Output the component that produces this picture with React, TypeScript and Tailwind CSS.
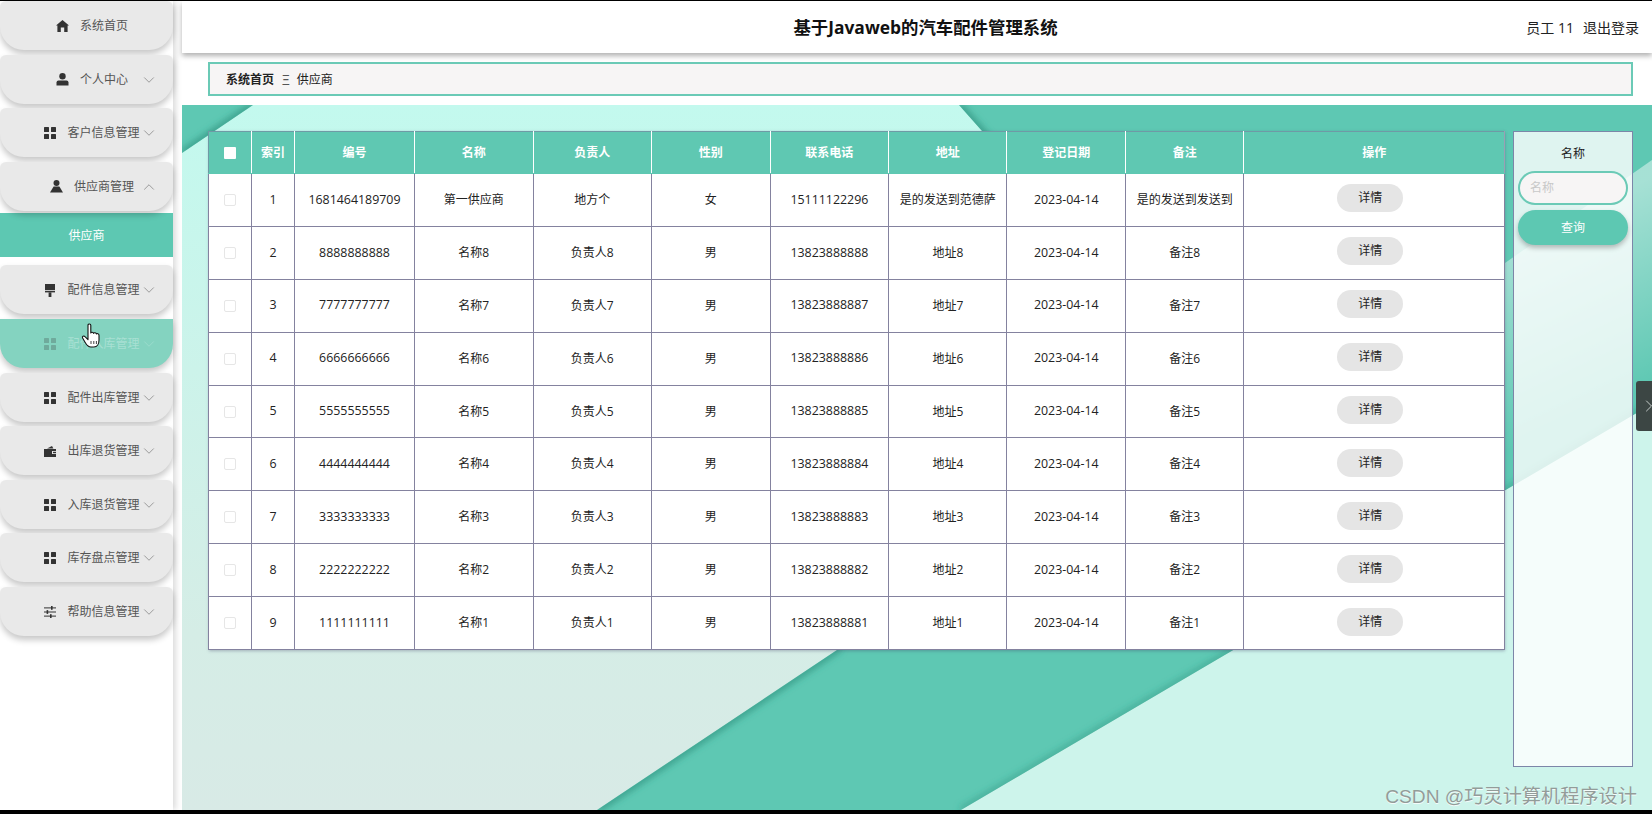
import React from "react";
import { ChevronDown, ChevronUp, ChevronRight } from "lucide-react";

const Home = () => (
  <svg width="13" height="12" viewBox="0 0 13 12" fill="#333"><path d="M6.5 0 L13 5.6 L11.6 5.6 V12 H8.2 V7.6 H4.8 V12 H1.4 V5.6 H0 Z" /></svg>
);
const User = () => (
  <svg width="13" height="13" viewBox="0 0 13 13" fill="#333"><circle cx="6.5" cy="3.2" r="3.2" /><path d="M0.5 9.5 Q0.5 7.6 2.5 7.6 H10.5 Q12.5 7.6 12.5 9.5 V12.5 H0.5 Z" /></svg>
);
const Custom = () => (
  <svg width="13" height="13" viewBox="0 0 13 13" fill="#333"><circle cx="6.5" cy="3" r="3" /><path d="M3.6 6.6 H9.4 L13 12.6 H0 Z" /></svg>
);
const Grid = () => (
  <svg width="12" height="12" viewBox="0 0 12 12" fill="#333"><rect width="5" height="5" rx="0.5" /><rect x="7" width="5" height="5" rx="0.5" /><rect y="7" width="5" height="5" rx="0.5" /><rect x="7" y="7" width="5" height="5" rx="0.5" /></svg>
);
const Brush = () => (
  <svg width="12" height="13" viewBox="0 0 12 13" fill="#333"><rect x="1" width="10" height="6" /><rect x="1" y="6.8" width="10" height="1.6" /><rect x="4.6" y="8.4" width="2.8" height="4.6" /></svg>
);
const Wallet = () => (
  <svg width="12" height="11" viewBox="0 0 12 11" fill="#333"><path d="M0 3 H12 V5 H8 V8 H12 V11 H0 Z" /><path d="M3 2.4 L8 0 L9.4 2.4 Z" /><rect x="9" y="5.8" width="3" height="1.4" /></svg>
);
const Sliders = () => (
  <svg width="12" height="12" viewBox="0 0 12 12" fill="#333"><rect y="1.4" width="12" height="1" /><rect x="7" y="0" width="1.6" height="3.8" /><rect y="5.5" width="12" height="1" /><rect x="2.6" y="4.1" width="1.6" height="3.8" /><rect y="9.6" width="12" height="1" /><rect x="6" y="8.2" width="1.6" height="3.8" /></svg>
);

type Item = { icon: React.ReactNode; label: string; arrow?: "down" | "up"; active?: boolean };
const items: Item[] = [
  { icon: <Home />, label: "系统首页" },
  { icon: <User />, label: "个人中心", arrow: "down" },
  { icon: <Grid />, label: "客户信息管理", arrow: "down" },
  { icon: <Custom />, label: "供应商管理", arrow: "up" },
  { icon: <Brush />, label: "配件信息管理", arrow: "down" },
  { icon: <Grid />, label: "配件入库管理", arrow: "down", active: true },
  { icon: <Grid />, label: "配件出库管理", arrow: "down" },
  { icon: <Wallet />, label: "出库退货管理", arrow: "down" },
  { icon: <Grid />, label: "入库退货管理", arrow: "down" },
  { icon: <Grid />, label: "库存盘点管理", arrow: "down" },
  { icon: <Sliders />, label: "帮助信息管理", arrow: "down" },
];

const headers = ["索引", "编号", "名称", "负责人", "性别", "联系电话", "地址", "登记日期", "备注", "操作"];
const rows = [
  ["1", "1681464189709", "第一供应商", "地方个", "女", "15111122296", "是的发送到范德萨", "2023-04-14", "是的发送到发送到"],
  ...[8, 7, 6, 5, 4, 3, 2, 1].map((n, i) => [
    String(i + 2),
    String(n).repeat(10),
    `名称${n}`,
    `负责人${n}`,
    "男",
    `1382388888${n}`,
    `地址${n}`,
    "2023-04-14",
    `备注${n}`,
  ]),
];
const widths = [43, 43, 120, 118.5, 118.5, 118.5, 118.7, 118.3, 118.5, 118.5, 260.5];

const band = "959,105 1652,105 1652,404 961,810 597,810 840,648 900,560 990,140";

function MenuItem({ item }: { item: Item }) {
  return (
    <div
      className={`relative h-[49px] mb-[4.6px] pt-[1px] flex items-center justify-center pl-[11px] gap-[11px] rounded-b-[24px] text-xs shadow-[0_4px_6px_rgba(0,0,0,0.22)] ${
        item.active ? "bg-[#84d3c0] text-[#a8e0d3] rounded-t-none" : "bg-[#e9e9e9] text-[#555] rounded-t-[6px]"
      }`}
    >
      <span className={item.active ? "opacity-25 flex" : "flex"}>{item.icon}</span>
      <span>{item.label}</span>
      {item.arrow === "down" && (
        <ChevronDown size={18} strokeWidth={0.8} className={`absolute right-[15px] ${item.active ? "text-[#a8e0d3]" : "text-[#666]"}`} />
      )}
      {item.arrow === "up" && <ChevronUp size={18} strokeWidth={0.8} className="absolute right-[15px] text-[#666]" />}
    </div>
  );
}

export default function App() {
  return (
    <div className="h-[814px] w-[1652px] overflow-hidden flex flex-col bg-black font-['Open_Sans','Noto_Sans_CJK_SC',sans-serif] text-[#222]">
      <div className="h-px shrink-0" />
      <div className="h-[809px] flex bg-white relative">
        <aside className="w-[173px] shrink-0 bg-white shadow-[3px_0_6px_rgba(0,0,0,0.14)] relative z-20">
          {items.slice(0, 4).map((it) => (
            <MenuItem key={it.label} item={it} />
          ))}
          <div className="-mt-[2px] mb-[8px] h-[44px] pt-[1px] bg-[#5dc8b2] text-white text-xs flex items-center justify-center">供应商</div>
          {items.slice(4).map((it) => (
            <MenuItem key={it.label} item={it} />
          ))}
        </aside>
        <div className="w-[9px] shrink-0 bg-white" />
        <main className="flex-1 flex flex-col min-w-0">
          <header className="h-[52px] shrink-0 relative bg-white shadow-[0_3px_5px_rgba(0,0,0,0.3)] flex items-center justify-center z-10">
            <h1 className="text-[17.4px] font-bold text-[#111] pl-[17px] pt-[1px]">基于Javaweb的汽车配件管理系统</h1>
            <div className="absolute right-[13px] top-[17px] text-sm leading-5 flex gap-[9px] text-[#222]">
              <span>员工 11</span>
              <span>退出登录</span>
            </div>
          </header>
          <div className="h-[52px] shrink-0 pt-[9px] pl-[26px] pr-[19px]">
            <div className="h-[34px] pt-[1px] bg-[#f7f5f5] border-2 border-[#6bcab6] flex items-center pl-[16px] text-xs text-[#222]">
              <span className="font-bold">系统首页</span>
              <span className="ml-2 mr-[7px] text-sm leading-none text-[#555]">Ξ</span>
              <span>供应商</span>
            </div>
          </div>
          <section className="flex-1 relative flex items-start pt-[26px] pl-[26px] pr-[19px] gap-[9px] overflow-hidden">
            <svg className="absolute inset-0 w-full h-full" viewBox="182 105 1470 705" preserveAspectRatio="none">
              <defs>
                <linearGradient id="bg" x1="0" y1="0" x2="0" y2="1">
                  <stop offset="0" stopColor="#c3f9ee" />
                  <stop offset="0.75" stopColor="#d5ede6" />
                  <stop offset="1" stopColor="#d8eae6" />
                </linearGradient>
                <linearGradient id="sheen" gradientUnits="userSpaceOnUse" x1="1560" y1="220" x2="1640" y2="390">
                  <stop offset="0" stopColor="#ffffff" stopOpacity="0.45" />
                  <stop offset="1" stopColor="#ffffff" stopOpacity="0" />
                </linearGradient>
                <filter id="soft" x="-20%" y="-20%" width="140%" height="140%">
                  <feGaussianBlur stdDeviation="3.5" />
                </filter>
                <clipPath id="bandClip">
                  <polygon points={band} />
                </clipPath>
                <clipPath id="triClip">
                  <polygon points="182,105 253,105 182,153" />
                </clipPath>
              </defs>
              <rect x="182" y="105" width="1470" height="705" fill="url(#bg)" />
              <polygon points="961,810 1652,404 1652,810" fill="#cdf4eb" />
              <polygon points={band} fill="#5ec8b3" />
              <polygon points="1505,263 1652,160 1652,404 1505,491" fill="url(#sheen)" />
              <g clipPath="url(#bandClip)" fill="none" stroke="#2f917e" strokeWidth="5" filter="url(#soft)">
                <line x1="959" y1="105" x2="990" y2="140" />
                <line x1="840" y1="648" x2="597" y2="810" />
                <line x1="1652" y1="404" x2="961" y2="810" strokeOpacity="0.6" />
              </g>
              <polygon points="182,105 253,105 182,153" fill="#5ec8b3" />
              <g clipPath="url(#triClip)">
                <line x1="253" y1="105" x2="182" y2="153" stroke="#2f917e" strokeWidth="5" filter="url(#soft)" />
              </g>
            </svg>
            <div className="relative w-[1296px] shrink-0 shadow-[1px_1px_3px_rgba(60,60,100,0.35)]">
              <table className="w-full table-fixed border-collapse text-xs">
                <colgroup>
                  {widths.map((w, i) => (
                    <col key={i} style={{ width: w }} />
                  ))}
                </colgroup>
                <thead>
                  <tr className="h-[42px] bg-[#5fc8b2] text-white font-bold">
                    <th className="border border-[#6f9aa5] border-r-white border-b-[#5fc8b2]">
                      <span className="block w-3 h-3 mx-auto bg-white rounded-[1px]" />
                    </th>
                    {headers.map((h, i) => (
                      <th
                        key={h}
                        className={`border-t border-b border-[#6f9aa5] border-b-[#5fc8b2] ${
                          i === headers.length - 1 ? "border-r border-r-[#9a9fb5]" : "border-r border-r-white"
                        }`}
                      >
                        {h}
                      </th>
                    ))}
                  </tr>
                </thead>
                <tbody>
                  {rows.map((r) => (
                    <tr key={r[0]} className="h-[52.9px] bg-white text-center text-[#222]">
                      <td className="border border-[#84829f]">
                        <span className="block w-3 h-3 mx-auto bg-white border border-[#e6e6e6] rounded-[2px]" />
                      </td>
                      {r.map((c, i) => (
                        <td key={i} className={`border border-[#84829f] ${/^[\d-]+$/.test(c) ? "text-[12.4px]" : ""}`}>
                          {c}
                        </td>
                      ))}
                      <td className="border border-[#84829f]">
                        <span className="inline-flex items-center justify-center w-[66px] h-[28px] rounded-full bg-[#e5e5e5] mr-2 mb-[3px]">详情</span>
                      </td>
                    </tr>
                  ))}
                </tbody>
              </table>
            </div>
            <div className="relative w-[120px] h-[636px] shrink-0 bg-white/80 border border-[#7c86a8] px-1 pt-[13px] flex flex-col items-stretch">
              <div className="h-[18px] leading-[18px] text-xs text-center text-[#222]">名称</div>
              <div className="mt-[8px] h-[34px] rounded-full border-2 border-[#6bcab6] bg-[#f7f5f5] pl-[10px] flex items-center text-xs text-[#c8c8c8]">名称</div>
              <div className="mt-[5px] h-[35px] rounded-full bg-[#5dc8b2] text-white text-xs flex items-center justify-center shadow-[0_3px_5px_rgba(0,0,0,0.25)]">查询</div>
            </div>
            <div className="absolute right-0 top-[276px] w-4 h-[50px] bg-[#3c4644] rounded-l-[3px] flex items-center justify-end overflow-hidden text-[#dfe5e3]">
              <ChevronRight size={20} strokeWidth={1} className="shrink-0 -mr-[6.5px]" />
            </div>
            <div className="absolute right-[15px] bottom-[1px] text-[19.2px] leading-6 text-[#939c99] [text-shadow:0_1px_0_rgba(255,255,255,0.8)] font-['Liberation_Sans','Noto_Sans_CJK_SC',sans-serif]">
              CSDN @巧灵计算机程序设计
            </div>
          </section>
        </main>
        <svg className="absolute left-[79px] top-[322px] z-30" width="24" height="26" viewBox="0 0 24 26">
          <path
            d="M9 2.2 C9 0.6 11.8 0.6 11.8 2.2 V10 C11.8 9 14.4 9 14.6 10.4 C14.8 9.4 17.2 9.5 17.4 11 C17.8 10.2 20 10.6 20 12.2 V17 C20 21 18 24 15 24 H12 C9.5 24 8 22.5 6.5 20 L3.6 15 C2.8 13.4 4.8 12.2 6 13.6 L9 16.6 Z"
            fill="#fff"
            stroke="#111"
            strokeWidth="1.1"
            strokeLinejoin="round"
          />
          <path d="M12 18 V21 M14.8 18 V21 M17.4 18 V21" stroke="#111" strokeWidth="0.8" fill="none" />
        </svg>
      </div>
      <div className="h-1 shrink-0" />
    </div>
  );
}
